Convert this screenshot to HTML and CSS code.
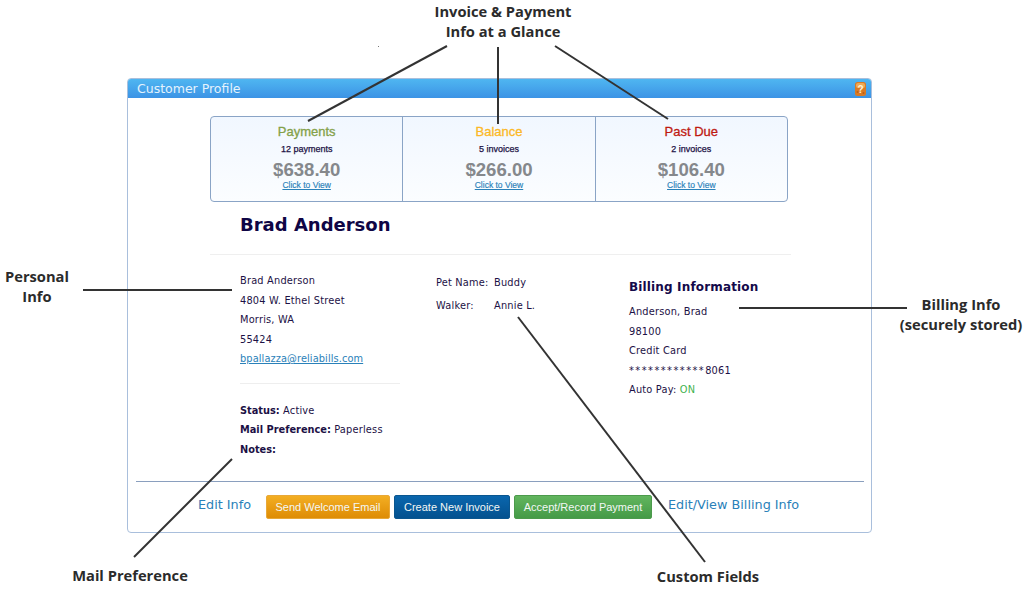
FILE: index.html
```html
<!DOCTYPE html>
<html lang="en">
<head>
<meta charset="utf-8">
<title>Customer Profile</title>
<link rel="stylesheet" href="styles.css">
</head>
<body>
<div class="stage">
  <section class="panel">
    <header class="panel-head">
      <span>Customer Profile</span>
      <svg class="help" viewBox="0 0 11 14" width="11" height="14"><rect width="11" height="14" rx="2.5" fill="#d97a24"/><rect x="1" y="1" width="9" height="5" rx="2" fill="#eeaa55"/><circle cx="2.5" cy="10" r="1" fill="#b9601a"/><circle cx="8.5" cy="11" r="1" fill="#b9601a"/><text x="5.5" y="10.5" text-anchor="middle" class="help-q">?</text></svg>
    </header>
    <div class="stats">
      <a class="stat"><h3 class="stat-title green">Payments</h3><p class="stat-sub">12 payments</p><p class="stat-amt">$638.40</p><span class="stat-link">Click to View</span></a>
      <a class="stat"><h3 class="stat-title amber">Balance</h3><p class="stat-sub">5 invoices</p><p class="stat-amt">$266.00</p><span class="stat-link">Click to View</span></a>
      <a class="stat"><h3 class="stat-title red">Past Due</h3><p class="stat-sub">2 invoices</p><p class="stat-amt">$106.40</p><span class="stat-link">Click to View</span></a>
    </div>
    <h1 class="name">Brad Anderson</h1>
    <div class="columns">
      <div class="col col-personal">
        <p>Brad Anderson</p>
        <p>4804 W. Ethel Street</p>
        <p>Morris, WA</p>
        <p>55424</p>
        <p><a class="mail">bpallazza@reliabills.com</a></p>
        <hr class="col-rule">
        <p><b class="key">Status:</b> Active</p>
        <p><b class="key">Mail Preference:</b> Paperless</p>
        <p><b class="key">Notes:</b></p>
      </div>
      <div class="col col-custom">
        <p class="field"><span class="field-label">Pet Name:</span><span>Buddy</span></p>
        <p class="field"><span class="field-label">Walker:</span><span>Annie L.</span></p>
      </div>
      <div class="col col-billing">
        <h2 class="billing-title">Billing Information</h2>
        <p>Anderson, Brad</p>
        <p>98100</p>
        <p>Credit Card</p>
        <p><span class="stars">************</span>8061</p>
        <p>Auto Pay: <span class="on">ON</span></p>
      </div>
    </div>
    <footer class="panel-foot">
      <a class="foot-link first">Edit Info</a>
      <a class="btn btn-orange">Send Welcome Email</a>
      <a class="btn btn-blue">Create New Invoice</a>
      <a class="btn btn-green">Accept/Record Payment</a>
      <a class="foot-link last">Edit/View Billing Info</a>
    </footer>
  </section>

  <svg class="leaders" width="1024" height="589" viewBox="0 0 1024 589">
    <g stroke="#333" stroke-width="2" fill="none">
      <path d="M447 46 308 121"/>
      <path d="M498 47V124"/>
      <path d="M555 46 668 119"/>
      <path d="M83 290H232"/>
      <path d="M739 308H907"/>
      <path d="M518 317 705 562"/>
      <path d="M232 459 134 557"/>
    </g>
    <rect x="378" y="46" width="1" height="1" fill="#777"/>
  </svg>

  <div class="note note-top">Invoice &amp; Payment<br>Info at a Glance</div>
  <div class="note note-personal">Personal<br>Info</div>
  <div class="note note-billing">Billing Info<br>(securely stored)</div>
  <div class="note note-mail">Mail Preference</div>
  <div class="note note-custom">Custom Fields</div>
</div>
</body>
</html>
```
FILE: styles.css
```css
* { box-sizing: border-box; }
html, body { margin: 0; padding: 0; background: #fff; }
.stage {
  position: relative;
  width: 1024px;
  height: 589px;
  overflow: hidden;
  padding: 78px 0 0 127px;
  font-family: "DejaVu Sans", Verdana, sans-serif;
  color: #1c1145;
}
p, h1, h2, h3 { margin: 0; }

.panel {
  width: 745px;
  height: 455px;
  border: 1px solid #a9bfdc;
  border-radius: 4px;
  background: #fff;
  overflow: hidden;
}
.panel-head {
  height: 19px;
  background: linear-gradient(#4fb6f1, #3c93e5);
  color: #e4f3fd;
  font-size: 12.5px;
  line-height: 21px;
  padding: 0 5px 0 9px;
  display: flex;
  justify-content: space-between;
  align-items: center;
}
.help { display: block; }
.help-q { font: bold 10px "Liberation Sans", sans-serif; fill: #fff2d8; }

.stats {
  display: flex;
  width: 578px;
  height: 86px;
  margin: 18px 0 0 82px;
  border: 1px solid #8aa4c6;
  border-radius: 4px;
  background: linear-gradient(#f1f7ff, #fbfdff);
  font-family: "Liberation Sans", Arial, sans-serif;
}
.stat {
  flex: 1;
  text-align: center;
  padding-top: 8px;
}
.stat + .stat { border-left: 1px solid #8aa4c6; }
.stat-title { font-size: 13px; line-height: 14px; font-weight: 400; -webkit-text-stroke: 0.3px currentColor; }
.green { color: #84a149; }
.amber { color: #fcb826; }
.red { color: #bf1a12; }
.stat-sub { font-size: 9px; line-height: 10px; margin-top: 5px; color: #1c1145; -webkit-text-stroke: 0.25px currentColor; }
.stat-amt { font-size: 18.6px; line-height: 20px; font-weight: 700; color: #85888c; margin-top: 6px; }
.stat-link { display: block; font-size: 8.5px; line-height: 9px; margin-top: 1px; color: #2a81b9; text-decoration: underline; -webkit-text-stroke: 0.15px currentColor; }

.name {
  font-size: 18px;
  line-height: 24px;
  font-weight: 700;
  color: #0f0545;
  margin: 11px 0 0 112px;
  padding-bottom: 17px;
}
.columns {
  width: 581px;
  margin-left: 82px;
  border-top: 1px solid #efefef;
  display: flex;
  font-size: 9.8px;
  letter-spacing: 0.2px;
  line-height: 19.5px;
}
.col p { white-space: nowrap; }
.col-personal { width: 196px; margin-left: 30px; padding-top: 16px; }
.col-rule { width: 160px; height: 1px; border: 0; background: #eee; margin: 14px 0 17px; }
.key { letter-spacing: 0; }
.mail { color: #2a81b9; text-decoration: underline; letter-spacing: 0.1px; }
.col-custom { width: 193px; padding-top: 18px; }
.field { display: flex; margin-bottom: 3.5px; }
.field-label { width: 58px; }
.col-billing { padding-top: 22px; }
.billing-title { font-size: 12px; letter-spacing: 0.15px; line-height: 20px; font-weight: 700; margin-bottom: 5px; color: #14094a; }
.stars { letter-spacing: 1.45px; }
.on { color: #3fb24d; }

.panel-foot {
  position: absolute;
  left: 136px;
  top: 481px;
  width: 728px;
  height: 40px;
  border-top: 1px solid #8a9fbe;
  display: flex;
  align-items: flex-start;
  padding-top: 13px;
  font-family: "Liberation Sans", Arial, sans-serif;
}
.foot-link { font-family: "DejaVu Sans", Verdana, sans-serif; font-size: 12.8px; line-height: 20px; color: #2a81b9; white-space: nowrap; }
.foot-link.first { margin: 0 14px 0 62px; width: 54px; }
.foot-link.last { margin-left: 16px; }
.btn {
  display: block;
  height: 24px;
  line-height: 23px;
  font-size: 11px;
  color: #f3f7f5;
  text-align: center;
  border-radius: 2px;
  margin-right: 4px;
}
.btn-orange { width: 124px; background: linear-gradient(#f3ae23, #de8c05); border: 1px solid #e8a838; }
.btn-blue { width: 116px; background: linear-gradient(#0a66ad, #03518f); border: 1px solid #0a568f; }
.btn-green { width: 138px; background: linear-gradient(#62b55e, #459a47); border: 1px solid #4c9a4c; margin-right: 0; }

.leaders { position: absolute; left: 0; top: 0; pointer-events: none; }
.note {
  position: absolute;
  font-family: "Open Sans", sans-serif;
  font-weight: 700;
  font-size: 14.7px;
  line-height: 20px;
  color: #2b2b2b;
  text-align: center;
  white-space: nowrap;
}
.note-top { left: 403px; top: 1px; width: 200px; }
.note-personal { left: 1px; top: 266px; width: 72px; }
.note-billing { left: 890px; top: 294px; width: 142px; }
.note-mail { left: 60px; top: 565px; width: 140px; }
.note-custom { left: 640px; top: 566px; width: 136px; }
```
